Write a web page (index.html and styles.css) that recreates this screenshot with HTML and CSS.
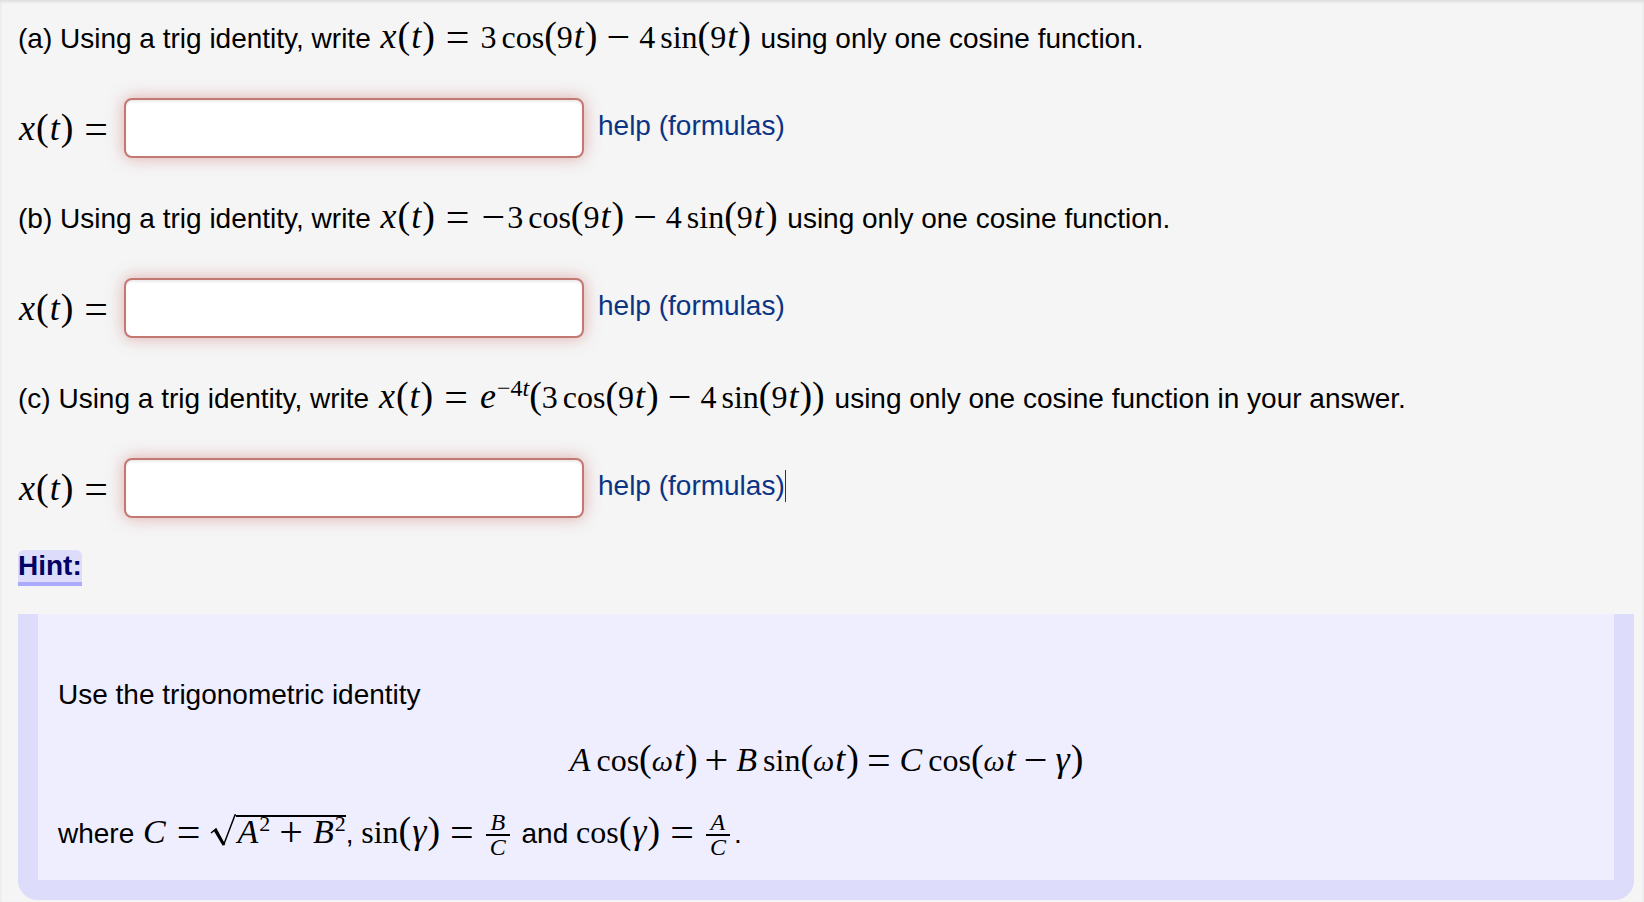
FILE: index.html
```
<!DOCTYPE html>
<html lang="en">
<head>
    <meta charset="utf-8">
    <title>Trig Identities</title>
    <link rel="stylesheet" href="styles.css">
</head>
<body>
    <main class="problem">
        <p class="question">(a) Using a trig identity, write <span class="math"><i>x</i><b>(</b><i>t</i><b>)</b><span class="rel">=</span>3<span class="fn">cos</span><b>(</b>9<i>t</i><b>)</b><span class="op">−</span>4<span class="fn">sin</span><b>(</b>9<i>t</i><b>)</b></span> using only one cosine function.</p>
        <div class="answer">
            <label class="math" for="ans-a"><i>x</i><b>(</b><i>t</i><b>)</b><span class="rel">=</span></label>
            <input type="text" id="ans-a">
            <a href="#formulas">help (formulas)</a>
        </div>

        <p class="question">(b) Using a trig identity, write <span class="math"><i>x</i><b>(</b><i>t</i><b>)</b><span class="rel">=</span><span class="neg">−</span>3<span class="fn">cos</span><b>(</b>9<i>t</i><b>)</b><span class="op">−</span>4<span class="fn">sin</span><b>(</b>9<i>t</i><b>)</b></span> using only one cosine function.</p>
        <div class="answer">
            <label class="math" for="ans-b"><i>x</i><b>(</b><i>t</i><b>)</b><span class="rel">=</span></label>
            <input type="text" id="ans-b">
            <a href="#formulas">help (formulas)</a>
        </div>

        <p class="question">(c) Using a trig identity, write <span class="math"><i>x</i><b>(</b><i>t</i><b>)</b><span class="rel">=</span><i>e</i><sup class="exp">−4<i>t</i></sup><b>(</b>3<span class="fn">cos</span><b>(</b>9<i>t</i><b>)</b><span class="op">−</span>4<span class="fn">sin</span><b>(</b>9<i>t</i><b>))</b></span> using only one cosine function in your answer.</p>
        <div class="answer">
            <label class="math" for="ans-c"><i>x</i><b>(</b><i>t</i><b>)</b><span class="rel">=</span></label>
            <input type="text" id="ans-c">
            <a href="#formulas" class="focused">help (formulas)</a>
        </div>

        <a href="#hint" class="hint-link">Hint:</a>
        <section class="hint" id="hint">
            <p>Use the trigonometric identity</p>
            <p class="display"><span class="math"><i class="cap">A</i><span class="fn">cos</span><b>(</b><i class="omega">ω</i><i>t</i><b>)</b><span class="op">+</span><i class="cap">B</i><span class="fn">sin</span><b>(</b><i class="omega">ω</i><i>t</i><b>)</b><span class="rel">=</span><i class="cap">C</i><span class="fn">cos</span><b>(</b><i class="omega">ω</i><i>t</i><span class="op">−</span><i>γ</i><b>)</b></span></p>
            <p class="where">where <span class="math"><i class="cap">C</i><span class="rel">=</span><svg class="radical" viewBox="0 0 26 33" aria-hidden="true"><path d="M1 19l5-4 8 15L25 1h1" fill="none" stroke="#000" stroke-width="1.5"/><path d="M5 16l9 15" stroke="#000" stroke-width="3"/></svg><span class="radicand"><i class="cap">A</i><sup>2</sup><span class="op">+</span><i class="cap">B</i><sup>2</sup></span></span>, <span class="math">sin<b>(</b><i>γ</i><b>)</b><span class="rel">=</span><span class="frac"><i>B</i><i>C</i></span></span> and <span class="math">cos<b>(</b><i>γ</i><b>)</b><span class="rel">=</span><span class="frac"><i>A</i><i>C</i></span></span>.</p>
        </section>
    </main>
</body>
</html>
```
FILE: styles.css
```
* {
    box-sizing: border-box;
}

body {
    margin: 0;
    min-height: 100vh;
    background-color: #f5f5f5;
    box-shadow: inset 0 2px 3px #ddd;
    color: #000;
    font-family: "Liberation Sans", Arial, sans-serif;
    font-size: 28px;
    line-height: 40px;
}

.problem {
    padding: 10px 10px 2px 18px;
}

p {
    margin: 0;
}

.question {
    height: 49px;
    padding-top: 9px;
    white-space: nowrap;
}

.question .math {
    margin: 0 2px 0 1px;
}

.answer {
    display: flex;
    align-items: center;
    height: 60px;
    margin: 39px 0 32px;
}

.answer input {
    width: 460px;
    height: 60px;
    margin: 0 14px 0 5px;
    padding: 8px 12px;
    border: 2px solid #c37872;
    border-radius: 8px;
    background-color: #fff;
    box-shadow: inset 0 2px 2px rgba(0, 0, 0, 0.08), 0 0 16px rgba(195, 100, 95, 0.5);
    font-size: 28px;
}

a {
    color: #0c3484;
    text-decoration: none;
}

.answer a {
    margin-bottom: 4px;
    line-height: 32px;
}

.focused {
    border-right: 1px solid #0c3484;
}

.math {
    font-family: "Liberation Serif", "Times New Roman", serif;
    font-size: 32px;
    line-height: 0;
    white-space: nowrap;
}

.math i {
    padding: 0 1px;
    font-size: 36px;
}

.math .cap {
    font-size: 34px;
}

.math .omega {
    padding: 0;
    font-size: 30px;
}

/* taller brackets */
.math b {
    font-size: 38px;
    font-weight: normal;
}

.rel, .op, .neg {
    font-size: 42px;
    vertical-align: -3px;
}

.rel {
    margin: 0 11px;
}

.op {
    margin: 0 9px;
}

.neg {
    margin: 0 2px 0 1px;
}

.fn {
    margin-left: 5px;
}

sup {
    font-size: 22px;
    line-height: 0;
    vertical-align: 12px;
}

.exp {
    font-size: 24px;
}

.math sup i {
    padding: 0;
    font-size: 24px;
}

.hint-link {
    display: inline-block;
    height: 36px;
    border-bottom: 4px solid #aaaaff;
    border-radius: 6px 6px 0 0;
    background-color: #ddddfb;
    color: #000066;
    font-weight: bold;
    line-height: 32px;
    vertical-align: top;
}

.hint {
    margin-top: 24px;
    padding: 61px 20px 17px;
    border: 20px solid #ddddfb;
    border-top: none;
    border-radius: 0 0 20px 20px;
    background-color: #eeeeff;
}

.display {
    margin: 27px 0 25px;
    text-align: center;
}

.display .rel {
    margin: 0 8px;
}

.display .op {
    margin: 0 7px;
}

.where {
    padding: 6px 0 4px;
}

.where .rel {
    margin: 0 10px;
}

.radical {
    width: 26px;
    height: 33px;
    vertical-align: -4px;
}

.radicand {
    display: inline-block;
    border-top: 2px solid #000;
    line-height: 30px;
}

.frac {
    display: inline-flex;
    flex-direction: column;
    width: 24px;
    margin: 0 4px 0 2px;
    line-height: 22px;
    text-align: center;
    vertical-align: middle;
}

.math .frac i {
    height: 23px;
    font-size: 24px;
}

.frac i:first-child {
    border-bottom: 2px solid #000;
    line-height: 18px;
}
```
